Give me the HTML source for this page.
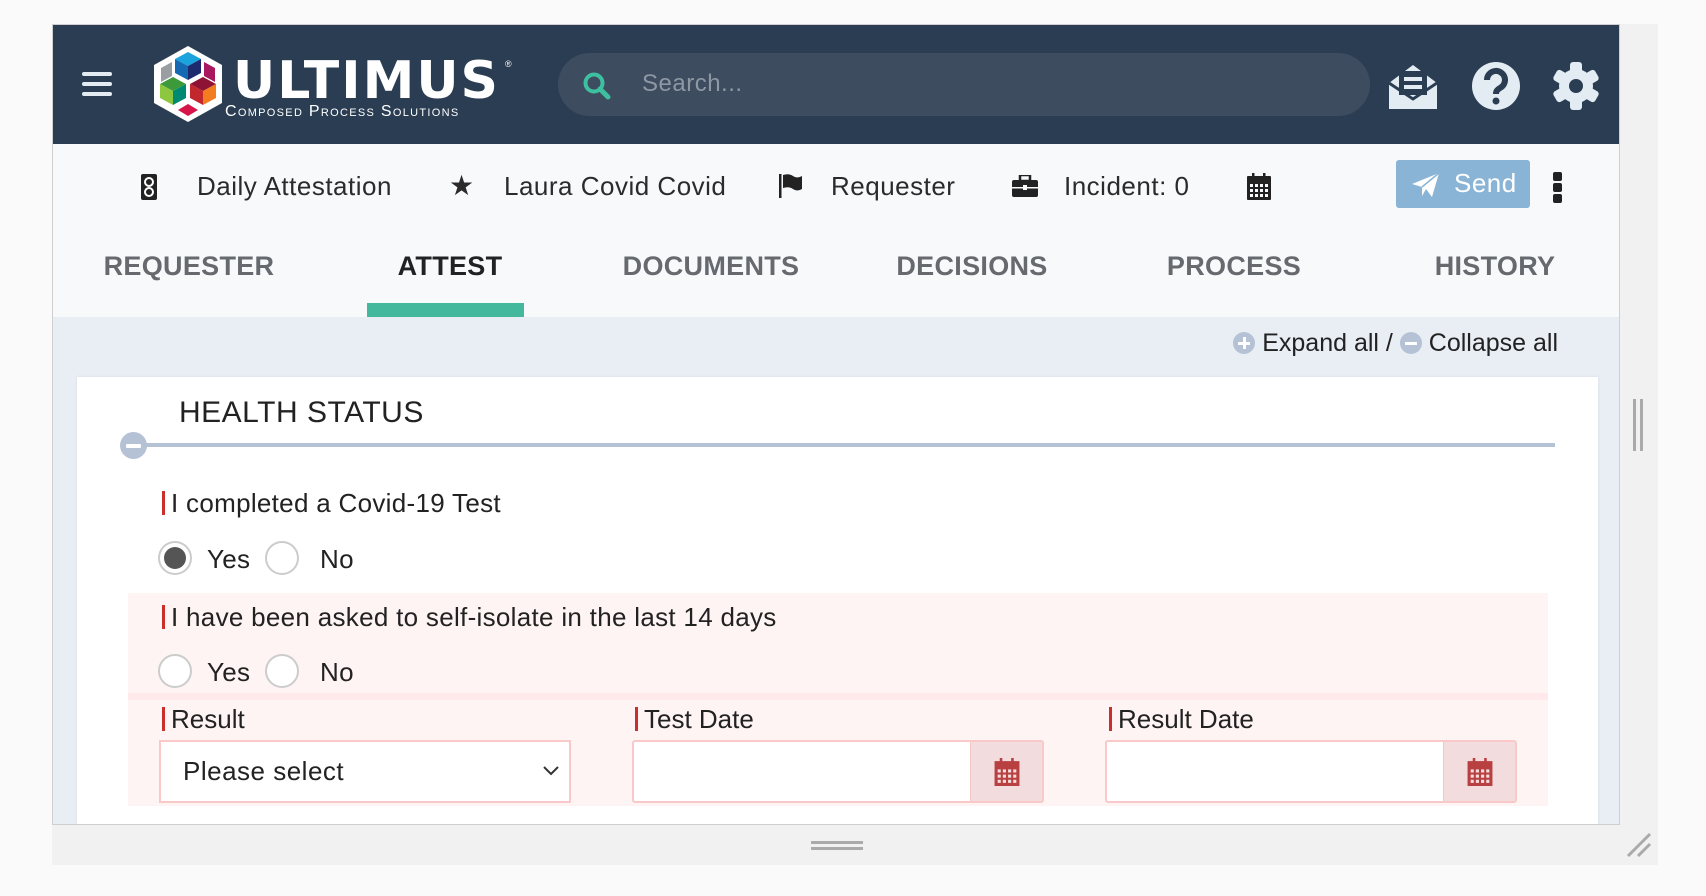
<!DOCTYPE html>
<html><head><meta charset="utf-8"><style>
*{box-sizing:border-box;margin:0;padding:0}
body{width:1706px;height:896px;background:#fafafa;font-family:"Liberation Sans",sans-serif;position:relative;overflow:hidden;color:#222}
.abs{position:absolute}
#gut{left:52px;top:24px;width:1606px;height:841px;background:#f1f1f1}
#frame{left:52px;top:24px;width:1568px;height:801px;background:#e9edf4;border:1px solid #cfcfcf;overflow:hidden}
#hdr{left:0;top:0;width:1568px;height:119px;background:#2a3d52}
#sub{left:0;top:119px;width:1568px;height:173px;background:#f8f9fb}
.t{position:absolute;font-size:26px;color:#2b2b2b;top:27px;line-height:30px;letter-spacing:0.5px}
.tab{position:absolute;top:107px;font-weight:bold;font-size:27px;color:#666a6f;transform:translateX(-50%);letter-spacing:0.3px}
#card{left:24px;top:352px;width:1521px;height:460px;background:#fff;box-shadow:0 0 3px rgba(0,0,0,.08)}
.q{position:absolute;font-size:26px;color:#222;line-height:28px;letter-spacing:0.3px}
.req{display:inline-block;width:3px;height:24px;background:#c9302c;vertical-align:-3px;margin-right:6px}
.rad{position:absolute;width:34px;height:34px;border-radius:50%;border:2px solid #ccc;background:#fff}
.lbl{position:absolute;font-size:26px;color:#222}
.inp{position:absolute;height:63px;border:2px solid #f9c9c9;background:#fff;border-radius:3px}
.btn{position:absolute;right:0;top:0;width:72px;height:59px;background:#f2dcdd;border-left:1px solid #f4c6c6}
</style></head><body>
<div id="gut" class="abs"></div>
<div id="frame" class="abs">
 <div id="hdr" class="abs">
  <div class="abs" style="left:29px;top:47px;width:30px;height:4px;background:#e3ecf3;border-radius:2px;box-shadow:0 10px 0 #e3ecf3,0 20px 0 #e3ecf3"></div>
  <svg class="abs" style="left:99px;top:19px" width="72" height="80" viewBox="0 0 72 80">
   <polygon points="36,2 70,21 70,59 36,78 2,59 2,21" fill="#fff"/>
   <polygon points="36,8 49,15 36,22 23,15" fill="#1aa3dc"/><polygon points="23,15 36,22 36,36 23,29" fill="#1569b3"/><polygon points="49,15 36,22 36,36 49,29" fill="#1d2a6e"/>
   <polygon points="9,24 20,18 20,32 9,38" fill="#9a9ea3"/><polygon points="52,18 63,24 63,38 52,32" fill="#a9185f"/>
   <polygon points="21,33 34,40 21,47 8,40" fill="#3d9a3a"/><polygon points="8,40 21,47 21,61 8,54" fill="#8dc63f"/><polygon points="21,47 34,40 34,54 21,61" fill="#008a72"/>
   <polygon points="51,33 64,40 51,47 38,40" fill="#8e1233"/><polygon points="38,40 51,47 51,61 38,54" fill="#c1272d"/><polygon points="51,47 64,40 64,54 51,61" fill="#f47c20"/>
   <polygon points="36,60 46,66 36,72 26,66" fill="#d6164a"/>
  </svg>
  <div class="abs" style="left:180px;top:30px;font-size:52px;font-weight:900;color:#fff;letter-spacing:2px;line-height:52px;font-family:'DejaVu Sans','Liberation Sans',sans-serif">ULTIMUS</div>
  <div class="abs" style="left:452px;top:34px;font-size:9px;color:#fff">®</div>
  <div class="abs" style="left:172px;top:78px;font-size:16px;color:#fff;letter-spacing:1.3px;font-variant:small-caps;line-height:18px">Composed Process Solutions</div>
  <div class="abs" style="left:505px;top:28px;width:812px;height:63px;background:#3d4c5f;border-radius:32px">
   <svg class="abs" style="left:24px;top:18px" width="30" height="30" viewBox="0 0 30 30"><circle cx="12" cy="12" r="8.5" fill="none" stroke="#3dbfa0" stroke-width="4"/><line x1="18" y1="18" x2="26" y2="26" stroke="#3dbfa0" stroke-width="5" stroke-linecap="round"/></svg>
   <div class="abs" style="left:84px;top:17px;font-size:24px;color:#8e98a4;letter-spacing:0.5px">Search...</div>
  </div>
  <svg class="abs" style="left:1334px;top:36px" width="52" height="52" viewBox="0 0 52 52"><path d="M2 22 L26 4 L50 22 V48 H2 Z" fill="#e3ecf3"/><rect x="12" y="10" width="28" height="24" fill="#2a3d52"/><rect x="17" y="16" width="18" height="4" fill="#e3ecf3"/><rect x="17" y="24" width="18" height="4" fill="#e3ecf3"/><path d="M2 22 L26 38 L50 22" fill="none" stroke="#2a3d52" stroke-width="3"/></svg>
  <svg class="abs" style="left:1418px;top:36px" width="50" height="50" viewBox="0 0 50 50"><circle cx="25" cy="25" r="24" fill="#e3ecf3"/><path d="M16 19 a9 9 0 1 1 13 8 c-3 2 -4 3 -4 6" fill="none" stroke="#2a3d52" stroke-width="6"/><circle cx="25" cy="40" r="3.5" fill="#2a3d52"/></svg>
  <svg class="abs" style="left:1498px;top:36px" width="50" height="50" viewBox="0 0 50 50"><g fill="#e3ecf3"><circle cx="25" cy="25" r="17"/><rect x="19" y="1" width="12" height="48" rx="3"/><rect x="19" y="1" width="12" height="48" rx="3" transform="rotate(60 25 25)"/><rect x="19" y="1" width="12" height="48" rx="3" transform="rotate(120 25 25)"/></g><circle cx="25" cy="25" r="7" fill="#2a3d52"/></svg>
 </div>
 <div id="sub" class="abs">
  <svg class="abs" style="left:88px;top:30px" width="16" height="26"><rect x="0" y="0" width="16" height="26" rx="2" fill="#222"/><circle cx="8" cy="8" r="4" fill="none" stroke="#fff" stroke-width="2"/><circle cx="8" cy="18" r="4" fill="none" stroke="#fff" stroke-width="2"/></svg>
  <div class="t" style="left:144px">Daily Attestation</div>
  <div class="t" style="left:396px;font-size:28px">★</div>
  <div class="t" style="left:451px">Laura Covid Covid</div>
  <svg class="abs" style="left:726px;top:30px" width="24" height="24"><rect x="0" y="0" width="2.5" height="24" fill="#222"/><path d="M4 1 Q10 -1 14 2 Q18 5 23 2 V15 Q18 18 14 15 Q10 12 4 14Z" fill="#222"/></svg>
  <div class="t" style="left:778px">Requester</div>
  <svg class="abs" style="left:959px;top:31px" width="26" height="22"><rect x="8" y="0" width="10" height="6" fill="none" stroke="#222" stroke-width="2.5"/><rect x="0" y="5" width="26" height="17" rx="2" fill="#222"/><rect x="0" y="12" width="26" height="1.5" fill="#f8f9fb"/><rect x="11" y="10" width="4" height="5" fill="#f8f9fb"/></svg>
  <div class="t" style="left:1011px">Incident: 0</div>
  <svg class="abs" style="left:1194px;top:29px" width="24" height="27"><rect x="5" y="0" width="2.5" height="5" fill="#222"/><rect x="16" y="0" width="2.5" height="5" fill="#222"/><rect x="0" y="3" width="24" height="24" rx="1" fill="#222"/><g fill="#f8f9fb"><rect x="3" y="11" width="3" height="3"/><rect x="8" y="11" width="3" height="3"/><rect x="13" y="11" width="3" height="3"/><rect x="18" y="11" width="3" height="3"/><rect x="3" y="16" width="3" height="3"/><rect x="8" y="16" width="3" height="3"/><rect x="13" y="16" width="3" height="3"/><rect x="18" y="16" width="3" height="3"/><rect x="3" y="21" width="3" height="3"/><rect x="8" y="21" width="3" height="3"/><rect x="13" y="21" width="3" height="3"/><rect x="18" y="21" width="3" height="3"/></g></svg>
  <div class="abs" style="left:1343px;top:16px;width:134px;height:48px;background:#8ab4d6;border-radius:3px">
   <svg class="abs" style="left:16px;top:12px" width="28" height="26" viewBox="0 0 28 26"><path d="M0 12 L27 1 L20 25 L14 17 L10 24 L10 15 Z" fill="#fff"/><path d="M10 15 L27 1" stroke="#8ab4d6" stroke-width="1.5"/></svg>
   <div class="abs" style="left:58px;top:8px;font-size:26px;color:#fff;letter-spacing:0.5px">Send</div>
  </div>
  <div class="abs" style="left:1500px;top:28px;width:9px;height:9px;background:#222;border-radius:2px;box-shadow:0 11px 0 #222,0 22px 0 #222"></div>
  <div class="tab" style="left:136px">REQUESTER</div>
  <div class="tab" style="left:397px;color:#222">ATTEST</div>
  <div class="tab" style="left:658px">DOCUMENTS</div>
  <div class="tab" style="left:919px">DECISIONS</div>
  <div class="tab" style="left:1181px">PROCESS</div>
  <div class="tab" style="left:1442px">HISTORY</div>
  <div class="abs" style="left:314px;top:159px;width:157px;height:14px;background:#43b89c"></div>
 </div>
 <div class="abs" style="right:61px;top:304px;font-size:25px;color:#222;white-space:nowrap">
  <span style="display:inline-block;width:22px;height:22px;border-radius:50%;background:#b5c2d6;vertical-align:-3px;position:relative"><span style="position:absolute;left:5px;top:9.5px;width:12px;height:3px;background:#fff"></span><span style="position:absolute;left:9.5px;top:5px;width:3px;height:12px;background:#fff"></span></span> Expand all / <span style="display:inline-block;width:22px;height:22px;border-radius:50%;background:#b5c2d6;vertical-align:-3px;position:relative"><span style="position:absolute;left:5px;top:9.5px;width:12px;height:3px;background:#fff"></span></span> Collapse all
 </div>
 <div id="card" class="abs">
  <div class="abs" style="left:102px;top:19px;font-size:30px;color:#222;letter-spacing:0.5px">HEALTH STATUS</div>
  <div class="abs" style="left:57px;top:66px;width:1421px;height:4px;background:#b5c2d6"></div>
  <div class="abs" style="left:43px;top:55px;width:27px;height:27px;border-radius:50%;background:#b5c2d6"><div class="abs" style="left:6px;top:11.5px;width:15px;height:4px;background:#fff;border-radius:1px"></div></div>
  <div class="q" style="left:85px;top:112px"><span class="req"></span>I completed a Covid-19 Test</div>
  <div class="rad" style="left:81px;top:164px"><div style="position:absolute;left:4px;top:4px;width:22px;height:22px;border-radius:50%;background:#555"></div></div>
  <div class="q" style="left:130px;top:168px">Yes</div>
  <div class="rad" style="left:188px;top:164px"></div>
  <div class="q" style="left:243px;top:168px">No</div>
  <div class="abs" style="left:51px;top:216px;width:1420px;height:213px;background:#fff4f4"></div>
  <div class="abs" style="left:51px;top:316px;width:1420px;height:7px;background:#ffe9ea"></div>
  <div class="q" style="left:85px;top:226px"><span class="req"></span>I have been asked to self-isolate in the last 14 days</div>
  <div class="rad" style="left:81px;top:277px"></div>
  <div class="q" style="left:130px;top:281px">Yes</div>
  <div class="rad" style="left:188px;top:277px"></div>
  <div class="q" style="left:243px;top:281px">No</div>
  <div class="lbl" style="left:85px;top:327px"><span class="req"></span>Result</div>
  <div class="lbl" style="left:558px;top:327px"><span class="req"></span>Test Date</div>
  <div class="lbl" style="left:1032px;top:327px"><span class="req"></span>Result Date</div>
  <div class="inp" style="left:82px;top:363px;width:412px;border-radius:0"><div class="abs" style="left:22px;top:14px;font-size:26px;color:#222;letter-spacing:0.5px">Please select</div><svg class="abs" style="right:10px;top:24px" width="16" height="10"><path d="M1 1 L8 8 L15 1" fill="none" stroke="#333" stroke-width="2"/></svg></div>
  <div class="inp" style="left:555px;top:363px;width:412px"><div class="btn"><svg style="position:absolute;left:22px;top:16px" width="28" height="28" viewBox="0 0 24 27"><rect x="5" y="0" width="2.5" height="5" fill="#b94040"/><rect x="16" y="0" width="2.5" height="5" fill="#b94040"/><rect x="0" y="3" width="24" height="24" fill="#b94040"/><g fill="#f2dcdd"><rect x="3" y="11" width="3" height="3"/><rect x="8" y="11" width="3" height="3"/><rect x="13" y="11" width="3" height="3"/><rect x="18" y="11" width="3" height="3"/><rect x="3" y="16" width="3" height="3"/><rect x="8" y="16" width="3" height="3"/><rect x="13" y="16" width="3" height="3"/><rect x="18" y="16" width="3" height="3"/><rect x="3" y="21" width="3" height="3"/><rect x="8" y="21" width="3" height="3"/><rect x="13" y="21" width="3" height="3"/><rect x="18" y="21" width="3" height="3"/></g></svg></div></div>
  <div class="inp" style="left:1028px;top:363px;width:412px"><div class="btn"><svg style="position:absolute;left:22px;top:16px" width="28" height="28" viewBox="0 0 24 27"><rect x="5" y="0" width="2.5" height="5" fill="#b94040"/><rect x="16" y="0" width="2.5" height="5" fill="#b94040"/><rect x="0" y="3" width="24" height="24" fill="#b94040"/><g fill="#f2dcdd"><rect x="3" y="11" width="3" height="3"/><rect x="8" y="11" width="3" height="3"/><rect x="13" y="11" width="3" height="3"/><rect x="18" y="11" width="3" height="3"/><rect x="3" y="16" width="3" height="3"/><rect x="8" y="16" width="3" height="3"/><rect x="13" y="16" width="3" height="3"/><rect x="18" y="16" width="3" height="3"/><rect x="3" y="21" width="3" height="3"/><rect x="8" y="21" width="3" height="3"/><rect x="13" y="21" width="3" height="3"/><rect x="18" y="21" width="3" height="3"/></g></svg></div></div>
 </div>
</div>
<div class="abs" style="left:1633px;top:399px;width:3px;height:52px;background:#aaa;box-shadow:7px 0 0 #aaa"></div>
<div class="abs" style="left:811px;top:841px;width:52px;height:3px;background:#aaa;box-shadow:0 6px 0 #aaa"></div>
<svg class="abs" style="left:1626px;top:832px" width="26" height="26"><path d="M2 24 L24 2 M12 24 L24 12" stroke="#aaa" stroke-width="3"/></svg>
</body></html>
